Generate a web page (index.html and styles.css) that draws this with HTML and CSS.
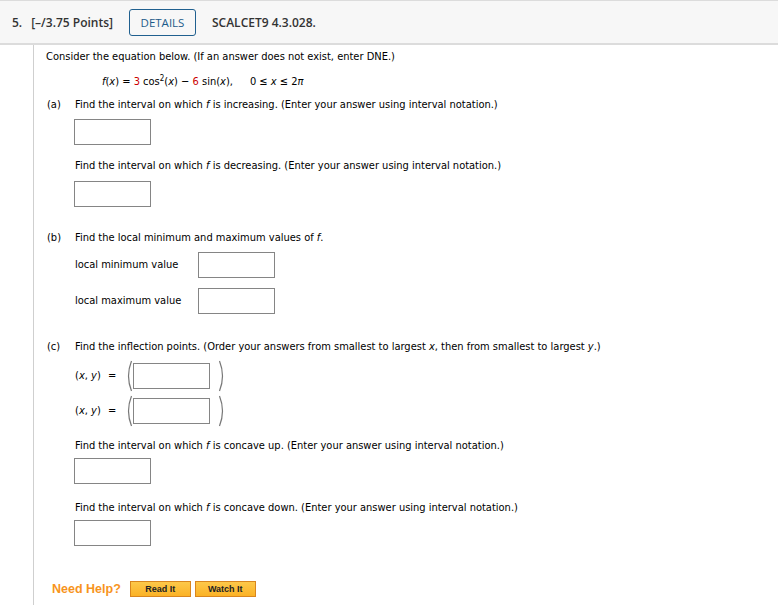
FILE: index.html
```html
<!DOCTYPE html>
<html>
<head>
<meta charset="utf-8">
<link rel="stylesheet" href="styles.css">
</head>
<body>
<div class="header">
  <span class="qnum">5.</span>
  <span class="points">[–/3.75 Points]</span>
  <span class="details">DETAILS</span>
  <span class="code">SCALCET9 4.3.028.</span>
</div>
<div class="main">
  <p class="intro">Consider the equation below. (If an answer does not exist, enter DNE.)</p>
  <p class="eq"><i>f</i>(<i>x</i>) = <span class="red">3</span> cos<sup>2</sup>(<i>x</i>) − <span class="red">6</span> sin(<i>x</i>),<span class="dom">0 ≤ <i>x</i> ≤ 2<i>π</i></span></p>

  <div class="part pa">
    <span class="plabel">(a)</span>
    <span>Find the interval on which <i>f</i> is increasing. (Enter your answer using interval notation.)</span>
  </div>
  <div class="box b1"></div>
  <p class="sub s-dec">Find the interval on which <i>f</i> is decreasing. (Enter your answer using interval notation.)</p>
  <div class="box b2"></div>

  <div class="part pb">
    <span class="plabel">(b)</span>
    <span>Find the local minimum and maximum values of <i>f</i>.</span>
  </div>
  <div class="row r-min"><span class="rlabel">local minimum value</span><div class="box"></div></div>
  <div class="row r-max"><span class="rlabel">local maximum value</span><div class="box"></div></div>

  <div class="part pc">
    <span class="plabel">(c)</span>
    <span>Find the inflection points. (Order your answers from smallest to largest <i>x</i>, then from smallest to largest <i>y</i>.)</span>
  </div>
  <div class="prow pr1">
    <span class="plab">(<i>x</i>, <i>y</i>)</span><span class="eqs">=</span>
    <svg class="paren" width="8" height="32" viewBox="0 0 8 32"><path d="M6.5 1 Q0.5 16 6.5 31" fill="none" stroke="#777" stroke-width="1.2"/></svg>
    <div class="box"></div>
    <svg class="paren pr" width="8" height="32" viewBox="0 0 8 32"><path d="M1.5 1 Q7.5 16 1.5 31" fill="none" stroke="#777" stroke-width="1.2"/></svg>
  </div>
  <div class="prow pr2">
    <span class="plab">(<i>x</i>, <i>y</i>)</span><span class="eqs">=</span>
    <svg class="paren" width="8" height="32" viewBox="0 0 8 32"><path d="M6.5 1 Q0.5 16 6.5 31" fill="none" stroke="#777" stroke-width="1.2"/></svg>
    <div class="box"></div>
    <svg class="paren pr" width="8" height="32" viewBox="0 0 8 32"><path d="M1.5 1 Q7.5 16 1.5 31" fill="none" stroke="#777" stroke-width="1.2"/></svg>
  </div>
  <p class="sub s-up">Find the interval on which <i>f</i> is concave up. (Enter your answer using interval notation.)</p>
  <div class="box b3"></div>
  <p class="sub s-down">Find the interval on which <i>f</i> is concave down. (Enter your answer using interval notation.)</p>
  <div class="box b4"></div>

  <div class="help">
    <span class="need">Need Help?</span>
    <span class="hbtn">Read It</span>
    <span class="hbtn">Watch It</span>
  </div>
</div>
</body>
</html>
```
FILE: styles.css
```css
html, body { margin: 0; padding: 0; background: #fff; }
body { font-family: "DejaVu Sans Condensed", "DejaVu Sans", Verdana, sans-serif; font-size: 11px; color: #000; }
p { margin: 0; }
i { font-style: italic; }

.header {
  height: 42px;
  background: #f7f7f7;
  border-top: 1px solid #dcdcdc;
  border-bottom: 2px solid #dcdcdc;
  display: flex;
  align-items: center;
  font-family: "Open Sans", sans-serif;
  font-size: 12px;
  color: #333;
  padding-left: 12px;
}
.qnum { font-weight: 600; margin-right: 9px; }
.points { font-weight: 600; }
.details {
  margin-left: 16px;
  border: 1px solid #20608f;
  border-radius: 3px;
  color: #1d5b8a;
  width: 65px;
  height: 25px;
  display: flex;
  align-items: center;
  justify-content: center;
  font-size: 11.5px;
}
.code { font-weight: 600; margin-left: 16px; }

.main {
  margin-left: 33px;
  border-left: 1px solid #cfcfcf;
  padding-left: 12px;
  min-height: 561px;
  line-height: 14px;
}
.intro { padding-top: 5px; }
.eq { margin-top: 11px; padding-left: 56px; }
.eq sup { font-size: 8px; line-height: 0; vertical-align: 4px; }
.red { color: #cc0000; }
.dom { margin-left: 17px; }

.part { display: flex; }
.plabel { width: 28px; padding-left: 1px; }
.pa { margin-top: 9px; }
.pb { margin-top: 24px; }
.pc { margin-top: 26px; }

.box {
  width: 75px;
  height: 24px;
  border: 1px solid #858585;
  background: #fff;
  box-sizing: content-box;
}
.b1, .b2, .b3, .b4 { margin-left: 28px; }
.b1 { margin-top: 7px; }
.sub { margin-left: 29px; }
.s-dec { margin-top: 14px; }
.b2 { margin-top: 8px; }

.row { display: flex; align-items: center; margin-left: 29px; }
.rlabel { width: 123px; }
.r-min { margin-top: 7px; }
.r-max { margin-top: 10px; }

.prow { display: flex; align-items: center; margin-left: 29px; height: 26px; }
.pr1 { margin-top: 9px; }
.pr2 { margin-top: 9px; }
.plab { width: 33px; }
.eqs { width: 17px; }
.paren { display: block; margin: -3px 0; }
.prow .box { margin-left: 0; margin-right: 8px; }

.s-up { margin-top: 15px; }
.b3 { margin-top: 5px; }
.s-down { margin-top: 17px; }
.b4 { margin-top: 5px; }

.help {
  display: flex;
  align-items: center;
  margin-top: 35px;
  margin-left: 6px;
  font-family: "Liberation Sans", Arial, sans-serif;
}
.need { color: #f7941d; font-weight: bold; font-size: 12.5px; margin-right: 9px; }
.hbtn {
  width: 59px;
  height: 14px;
  border: 1px solid #d9861e;
  background: linear-gradient(#fdc84a, #fbb226);
  font-size: 9px;
  font-weight: bold;
  color: #222;
  display: flex;
  align-items: center;
  justify-content: center;
  margin-right: 4px;
}
```
